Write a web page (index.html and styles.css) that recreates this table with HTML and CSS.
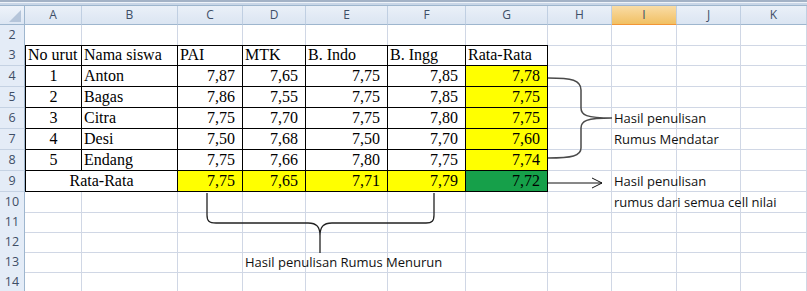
FILE: index.html
```html
<!DOCTYPE html>
<html lang="id">

<head>
  <meta charset="UTF-8">
  <title>Nilai Siswa</title>
  <link rel="stylesheet" href="styles.css">
</head>

<body>

  <div class="topbar"></div>

  <div class="sheet">
    <!-- column headers -->
    <div class="row head">
      <div class="corner">
        <svg width="24" height="18" viewBox="0 0 24 18"><polygon points="21,4 21,16 9,16" fill="#b5c5da"/></svg>
      </div>
      <div class="ch">A</div><div class="ch">B</div><div class="ch">C</div><div class="ch">D</div>
      <div class="ch">E</div><div class="ch">F</div><div class="ch">G</div><div class="ch">H</div>
      <div class="ch sel">I</div><div class="ch">J</div><div class="ch">K</div>
    </div>

    <div class="row r20">
      <div class="rh">2</div>
      <div class="c tb"></div><div class="c tb"></div><div class="c tb"></div><div class="c tb"></div>
      <div class="c tb"></div><div class="c tb"></div><div class="c tb"></div>
      <div class="c"></div><div class="c"></div><div class="c"></div><div class="c"></div>
    </div>

    <div class="row r21">
      <div class="rh">3</div>
      <div class="c t tl">No urut</div><div class="c t">Nama siswa</div><div class="c t">PAI</div>
      <div class="c t">MTK</div><div class="c t">B. Indo</div><div class="c t">B. Ingg</div>
      <div class="c t">Rata-Rata</div>
      <div class="c"></div><div class="c"></div><div class="c"></div><div class="c"></div>
    </div>

    <div class="row r21">
      <div class="rh">4</div>
      <div class="c t tl ctr">1</div><div class="c t">Anton</div>
      <div class="c t num">7,87</div><div class="c t num">7,65</div><div class="c t num">7,75</div>
      <div class="c t num">7,85</div><div class="c t num y">7,78</div>
      <div class="c"></div><div class="c"></div><div class="c"></div><div class="c"></div>
    </div>

    <div class="row r21">
      <div class="rh">5</div>
      <div class="c t tl ctr">2</div><div class="c t">Bagas</div>
      <div class="c t num">7,86</div><div class="c t num">7,55</div><div class="c t num">7,75</div>
      <div class="c t num">7,85</div><div class="c t num y">7,75</div>
      <div class="c"></div><div class="c"></div><div class="c"></div><div class="c"></div>
    </div>

    <div class="row r21">
      <div class="rh">6</div>
      <div class="c t tl ctr">3</div><div class="c t">Citra</div>
      <div class="c t num">7,75</div><div class="c t num">7,70</div><div class="c t num">7,75</div>
      <div class="c t num">7,80</div><div class="c t num y">7,75</div>
      <div class="c"></div><div class="c note">Hasil penulisan</div><div class="c"></div><div class="c"></div>
    </div>

    <div class="row r21">
      <div class="rh">7</div>
      <div class="c t tl ctr">4</div><div class="c t">Desi</div>
      <div class="c t num">7,50</div><div class="c t num">7,68</div><div class="c t num">7,50</div>
      <div class="c t num">7,70</div><div class="c t num y">7,60</div>
      <div class="c"></div><div class="c note">Rumus Mendatar</div><div class="c"></div><div class="c"></div>
    </div>

    <div class="row r21">
      <div class="rh">8</div>
      <div class="c t tl ctr">5</div><div class="c t">Endang</div>
      <div class="c t num">7,75</div><div class="c t num">7,66</div><div class="c t num">7,80</div>
      <div class="c t num">7,75</div><div class="c t num y">7,74</div>
      <div class="c"></div><div class="c"></div><div class="c"></div><div class="c"></div>
    </div>

    <div class="row r21">
      <div class="rh">9</div>
      <div class="c t tl ctr span2">Rata-Rata</div>
      <div class="c t num y">7,75</div><div class="c t num y">7,65</div><div class="c t num y">7,71</div>
      <div class="c t num y">7,79</div><div class="c t num g">7,72</div>
      <div class="c"></div><div class="c note">Hasil penulisan</div><div class="c"></div><div class="c"></div>
    </div>

    <div class="row r20">
      <div class="rh">10</div>
      <div class="c"></div><div class="c"></div><div class="c"></div><div class="c"></div>
      <div class="c"></div><div class="c"></div><div class="c"></div><div class="c"></div>
      <div class="c note">rumus dari semua cell nilai</div><div class="c"></div><div class="c"></div>
    </div>

    <div class="row r20">
      <div class="rh">11</div>
      <div class="c"></div><div class="c"></div><div class="c"></div><div class="c"></div>
      <div class="c"></div><div class="c"></div><div class="c"></div><div class="c"></div>
      <div class="c"></div><div class="c"></div><div class="c"></div>
    </div>

    <div class="row r20">
      <div class="rh">12</div>
      <div class="c"></div><div class="c"></div><div class="c"></div><div class="c"></div>
      <div class="c"></div><div class="c"></div><div class="c"></div><div class="c"></div>
      <div class="c"></div><div class="c"></div><div class="c"></div>
    </div>

    <div class="row r20">
      <div class="rh">13</div>
      <div class="c"></div><div class="c"></div><div class="c"></div>
      <div class="c note">Hasil penulisan Rumus Menurun</div>
      <div class="c"></div><div class="c"></div><div class="c"></div><div class="c"></div>
      <div class="c"></div><div class="c"></div><div class="c"></div>
    </div>

    <div class="row r20">
      <div class="rh">14</div>
      <div class="c"></div><div class="c"></div><div class="c"></div><div class="c"></div>
      <div class="c"></div><div class="c"></div><div class="c"></div><div class="c"></div>
      <div class="c"></div><div class="c"></div><div class="c"></div>
    </div>

    <!-- braces and arrow drawn over the grid -->
    <svg class="marks" width="807" height="292" viewBox="0 0 807 292">
      <path class="brace-r" d="M548 78 C572 78 581 80 581 90 L581 108 C581 115 586 118 612 118 C586 118 581 121 581 128 L581 148 C581 156 572 158 548 158"/>
      <path class="arrow" d="M548 183 H602 M592 178 L602 183 L592 188"/>
      <path class="brace-b" d="M207 193 V215 C207 221 209 223 216 223 H308 C317 223 320 227 320 236 V253 M320 236 C320 227 323 223 332 223 H426 C432 223 434 221 434 215 V193"/>
    </svg>
  </div>

</body>

</html>
```

FILE: styles.css
```css
body {
  margin: 0;
  padding: 0;
  background-color: #fff;
  width: 807px;
  height: 291px;
  overflow: hidden;
}

/* strip under the formula bar */
.topbar {
  height: 6px;
  background: linear-gradient(#a3b2c6 0 2px, #eef3f9 2px 3px, #c9d6e7 3px 5px, #9eb6ce 5px 6px);
}

.sheet {
  position: relative;
}

.row {
  display: grid;
  grid-template-columns: 25px 57px 96px 65px 63px 82px 78px 82px 64px 65px 64px 66px;
}

.head {
  height: 19px;
}

.r20 {
  height: 20px;
}

.r21 {
  height: 21px;
}

.corner {
  background: linear-gradient(#eef3fa, #dce6f3);
  border-right: 1px solid #9eb6ce;
  border-bottom: 1px solid #9eb6ce;
  box-sizing: border-box;
  overflow: hidden;
}

.corner svg {
  display: block;
}

.ch {
  background: linear-gradient(#eaf0f8, #dbe5f2);
  border-right: 1px solid #c0cfe2;
  border-bottom: 1px solid #9eb6ce;
  box-sizing: border-box;
  text-align: center;
  font-family: "Open Sans", sans-serif;
  font-size: 12px;
  line-height: 18px;
  color: #3e4e66;
}

.ch.sel {
  background: linear-gradient(#f9dca6, #f1c063);
  border-bottom-color: #f29536;
}

.rh {
  background: #e4ecf7;
  border-right: 1px solid #9eb6ce;
  border-bottom: 1px solid #c5d2e3;
  box-sizing: border-box;
  text-align: center;
  font-family: "Open Sans", sans-serif;
  font-size: 12.5px;
  line-height: 20px;
  color: #3e4e66;
}

.c {
  border-right: 1px solid #d0d7e5;
  border-bottom: 1px solid #d0d7e5;
  box-sizing: border-box;
  padding: 0 2px;
  white-space: nowrap;
  font-family: "Liberation Serif", serif;
  font-size: 16px;
  line-height: 20px;
  color: #000;
}

/* table cells with black borders */
.t {
  border-right-color: #000;
  border-bottom-color: #000;
}

.tl {
  border-left: 1px solid #000;
}

.tb {
  border-bottom-color: #000;
}

.span2 {
  grid-column: span 2;
}

.num {
  text-align: right;
  padding-right: 7px;
}

.ctr {
  text-align: center;
}

.y {
  background-color: #ffff00;
}

.g {
  background-color: #16a04a;
}

/* captions spilling over the empty cells */
.note {
  position: relative;
  z-index: 1;
  overflow: visible;
  font-family: "Open Sans", sans-serif;
  font-size: 13px;
  color: #111;
}

.marks {
  position: absolute;
  left: 0;
  top: -6px;
  pointer-events: none;
  z-index: 2;
}

.marks path {
  fill: none;
}

.brace-r {
  stroke: #4a4a4a;
  stroke-width: 1.5;
}

.arrow {
  stroke: #111;
  stroke-width: 1;
}

.brace-b {
  stroke: #222;
  stroke-width: 1.3;
}
```
